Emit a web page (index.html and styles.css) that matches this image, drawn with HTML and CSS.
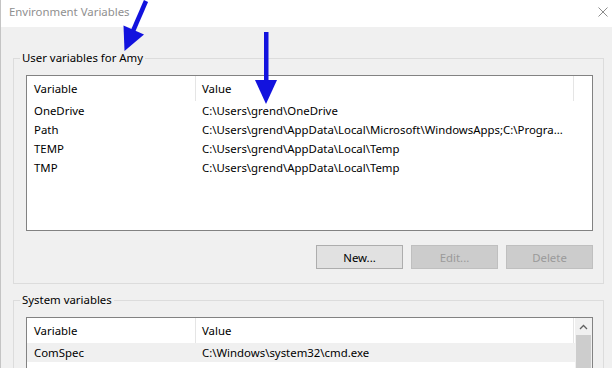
FILE: index.html
```html
<!DOCTYPE html>
<html lang="en">
<head>
<meta charset="utf-8">
<title>Environment Variables</title>
<link rel="stylesheet" href="styles.css">
</head>
<body>
<div class="window">
  <div class="titlebar">
    <span class="title">Environment Variables</span>
    <svg class="close" width="10" height="10" viewBox="0 0 10 10"><path d="M0.5 0.5 L9.5 9.5 M9.5 0.5 L0.5 9.5" stroke="#8c8c8c" stroke-width="1" fill="none"/></svg>
  </div>
  <div class="content">
    <fieldset class="group group-user">
      <legend>User variables for Amy</legend>
      <div class="list list-user">
        <div class="list-main">
          <div class="list-head">
            <div class="hcell hcell-var">Variable</div>
            <div class="hcell hcell-val">Value</div>
          </div>
          <div class="row"><div class="cell cell-var">OneDrive</div><div class="cell cell-val">C:\Users\grend\OneDrive</div></div>
          <div class="row"><div class="cell cell-var">Path</div><div class="cell cell-val">C:\Users\grend\AppData\Local\Microsoft\WindowsApps;C:\Progra...</div></div>
          <div class="row"><div class="cell cell-var">TEMP</div><div class="cell cell-val">C:\Users\grend\AppData\Local\Temp</div></div>
          <div class="row"><div class="cell cell-var">TMP</div><div class="cell cell-val">C:\Users\grend\AppData\Local\Temp</div></div>
        </div>
      </div>
      <div class="buttons">
        <button class="btn">New...</button>
        <button class="btn" disabled>Edit...</button>
        <button class="btn" disabled>Delete</button>
      </div>
    </fieldset>
    <fieldset class="group group-system">
      <legend>System variables</legend>
      <div class="list list-system">
        <div class="list-main">
          <div class="list-head">
            <div class="hcell hcell-var">Variable</div>
            <div class="hcell hcell-val">Value</div>
          </div>
          <div class="row row-hover"><div class="cell cell-var">ComSpec</div><div class="cell cell-val">C:\Windows\system32\cmd.exe</div></div>
          <div class="row"><div class="cell cell-var">NUMBER_OF_PROCESSORS</div><div class="cell cell-val">8</div></div>
        </div>
        <div class="scrollbar">
          <div class="sb-up"><svg width="9" height="6" viewBox="0 0 9 6"><path d="M1 5 L4.5 1.5 L8 5" stroke="#606060" stroke-width="1.3" fill="none"/></svg></div>
          <div class="sb-thumb"></div>
        </div>
      </div>
    </fieldset>
  </div>
  <svg class="arrows" width="612" height="368" viewBox="0 0 612 368">
    <line x1="146" y1="1" x2="133" y2="31" stroke="#1212de" stroke-width="4.5"/>
    <polygon points="124.5,51 144,34.5 123.5,25.5" fill="#1212de"/>
    <rect x="264" y="32" width="4.5" height="50" fill="#1212de"/>
    <polygon points="255,80 277,80 266,104" fill="#1212de"/>
  </svg>
</div>
</body>
</html>
```

FILE: styles.css
```css
* { box-sizing: border-box; }
html, body {
  margin: 0;
  padding: 0;
}
body {
  width: 612px;
  height: 368px;
  overflow: hidden;
  background: #f0f0f0;
  font-family: "Noto Sans", "Open Sans", sans-serif;
  font-size: 11.4px;
  color: #000;
}
.window {
  position: relative;
  width: 612px;
  height: 368px;
  overflow: hidden;
  background: #f0f0f0;
  border-left: 1px solid #c4c4c4;
}
.titlebar {
  height: 27px;
  background: #fff;
  display: flex;
  align-items: center;
  justify-content: space-between;
  padding: 0 4px 3px 8px;
}
.title {
  color: #8f8f8f;
  font-size: 11.4px;
  line-height: 16px;
}
.close { display: block; }
.content {
  padding: 23px 8px 0 12px;
  display: flex;
  flex-direction: column;
  gap: 8px;
}
.group {
  margin: 0;
  border: 1px solid #dcdcdc;
  padding: 0 10px 14px 12px;
  min-width: 0;
}
.group legend {
  padding: 0 2px;
  margin-left: -6px;
  line-height: 16px;
  font-size: 11.4px;
}
.list {
  margin-top: 9px;
  border: 1px solid #828282;
  background: #fff;
  display: flex;
}
.list-user { height: 156px; }
.list-system { height: 80px; }
.list-main { flex: 1; min-width: 0; }
.list-head {
  display: grid;
  grid-template-columns: 169px 378px;
  height: 25px;
}
.hcell {
  display: flex;
  align-items: center;
  border-right: 1px solid #e5e5e5;
  padding-bottom: 1px;
}
.hcell-var { padding-left: 7px; }
.hcell-val { padding-left: 6px; }
.row {
  display: grid;
  grid-template-columns: 169px 1fr;
  height: 19px;
  align-items: center;
}
.row-hover { background: #f0f0f0; }
.cell { white-space: nowrap; overflow: hidden; line-height: 16px; }
.cell-var { padding-left: 7px; }
.cell-val { padding-left: 6px; }
.buttons {
  margin-top: 14px;
  display: flex;
  justify-content: flex-end;
  gap: 8px;
}
.btn {
  width: 87px;
  height: 24px;
  font-family: inherit;
  font-size: 11.4px;
  background: #e1e1e1;
  border: 1px solid #adadad;
  color: #000;
  padding: 0;
  border-radius: 0;
}
.btn:disabled {
  background: #cccccc;
  border-color: #bfbfbf;
  color: #9a9a9a;
}
.scrollbar {
  width: 17px;
  background: #f0f0f0;
  display: flex;
  flex-direction: column;
}
.sb-up {
  height: 17px;
  display: flex;
  align-items: center;
  justify-content: center;
}
.sb-thumb {
  flex: 1;
  background: #cdcdcd;
  margin: 0 1px;
}
.arrows {
  position: absolute;
  left: -1px;
  top: 0;
  pointer-events: none;
}
```
